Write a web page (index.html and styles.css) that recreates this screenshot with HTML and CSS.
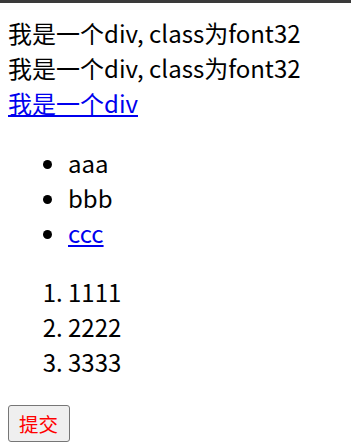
FILE: index.html
```html
<!DOCTYPE html>
<html lang="zh">
<head>
<meta charset="utf-8">
<title>demo</title>
<link rel="stylesheet" href="styles.css">
</head>
<body>
<div class="topbar"></div>
<main class="page">
  <div class="font32">我是一个div, class为font32</div>
  <div class="font32">我是一个div, class为font32</div>
  <div><a class="link" href="#">我是一个div</a></div>
  <ul class="list list-bullets">
    <li>aaa</li>
    <li>bbb</li>
    <li><a class="link" href="#">ccc</a></li>
  </ul>
  <ol class="list list-numbers">
    <li>1111</li>
    <li>2222</li>
    <li>3333</li>
  </ol>
  <button class="submit" type="button">提交</button>
</main>
</body>
</html>
```
FILE: styles.css
```css
html, body {
  margin: 0;
  padding: 0;
  background: #ffffff;
}
body {
  font-family: "Noto Sans CJK SC", "Noto Sans", sans-serif;
  font-size: 24px;
  line-height: normal;
  color: #000000;
}
.topbar {
  height: 3px;
  background: #3a3a3a;
}
.page {
  padding: 12px 8px 0 8px;
}
.link {
  color: #0000ee;
  text-decoration: underline;
}
.list {
  padding-left: 60px;
}
.list-bullets {
  margin: 25px 0 24px;
}
.list-numbers {
  margin: 24px 0 26px;
}
.submit {
  display: block;
  font-family: "Noto Sans CJK SC", sans-serif;
  font-size: 19.5px;
  line-height: 28px;
  color: #ff0000;
  background: #efefef;
  border: 1px solid #767676;
  border-radius: 3px;
  padding: 4px 11px 3px 10px;
  margin: 0;
}
```
